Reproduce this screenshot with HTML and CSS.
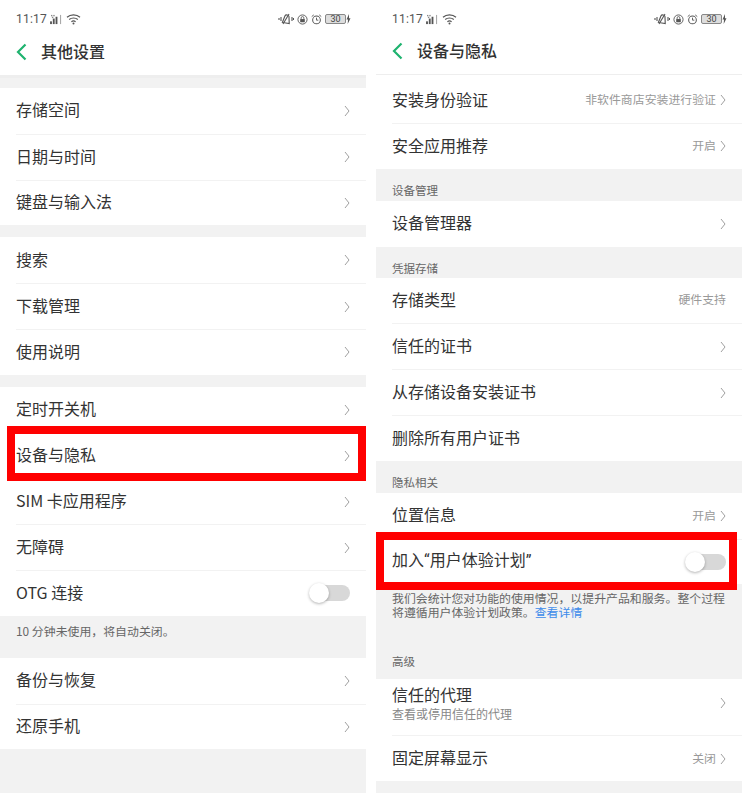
FILE: index.html
```html
<!DOCTYPE html>
<html lang="zh-CN">
<head>
<meta charset="utf-8">
<title>设置</title>
<link rel="stylesheet" href="styles.css">
</head>
<body>
<svg class="defs" width="0" height="0" aria-hidden="true">
  <symbol id="chev" viewBox="0 0 6 12"><path d="M1 1l4 5-4 5" fill="none" stroke="#a0a0a0" stroke-width="1"/></symbol>
  <symbol id="back" viewBox="0 0 11 18"><path d="M9.5 1.5L2 9l7.5 7.5" fill="none" stroke="#1fb36f" stroke-width="2.2"/></symbol>
  <symbol id="sig" viewBox="0 0 14 12"><g fill="#555"><rect x="0" y="8" width="2" height="3"/><rect x="3" y="5" width="2" height="6"/><rect x="6" y="3" width="2" height="8"/><rect x="11" y="1" width="1" height="10" fill="#999"/><rect x="1" y="1" width="1.500" height="1.500" fill="#888"/><rect x="3.500" y="1" width="1.500" height="1.500" fill="#888"/><rect x="2" y="3" width="1.500" height="1.500" fill="#888"/></g></symbol>
  <symbol id="wifi" viewBox="0 0 15 12"><g fill="none" stroke="#555" stroke-width="1.2"><path d="M1 4.200c3.600-3.200 9.400-3.200 13 0"/><path d="M3.200 6.500c2.400-2 6.200-2 8.600 0"/><path d="M5.400 8.700c1.200-.9 3-.9 4.200 0"/></g><circle cx="7.500" cy="10.500" r="1" fill="#555"/></symbol>
  <symbol id="vib" viewBox="0 0 16 12"><g fill="none" stroke="#555" stroke-width="1.100"><path d="M5 10l1.500-7c.4-1.600 3.600-1.600 4 0L12 10z" transform="rotate(10 8 6)"/><path d="M3 4v4M1 5v2M14 4v4M15.500 5v2"/><path d="M5 11L11 1"/></g></symbol>
  <symbol id="lock" viewBox="0 0 12 12"><circle cx="6" cy="6" r="5" fill="none" stroke="#555" stroke-width="1"/><rect x="3.500" y="5.500" width="5" height="3.500" fill="#555"/><path d="M4.500 5.500V4.300a1.500 1.500 0 0 1 3 0v1.200" fill="none" stroke="#555" stroke-width=".9"/></symbol>
  <symbol id="alarm" viewBox="0 0 12 12"><circle cx="6" cy="6.500" r="4.200" fill="none" stroke="#555" stroke-width="1.100"/><path d="M6 4v2.700h2M.8 2.800L3 1M11.200 2.800L9 1" fill="none" stroke="#555" stroke-width="1"/></symbol>
  <symbol id="bolt" viewBox="0 0 5 10"><path d="M3 0L.5 5.500H2L1.700 10 4.500 4.200H3z" fill="#555"/></symbol>
</svg>

<main class="screens">
  <section class="screen">
    <div class="status">
      <span class="time">11:17</span>
      <svg class="i-sig"><use href="#sig"/></svg>
      <svg class="i-wifi"><use href="#wifi"/></svg>
      <span class="status-right">
        <svg class="i-vib"><use href="#vib"/></svg>
        <svg class="i-round"><use href="#lock"/></svg>
        <svg class="i-round"><use href="#alarm"/></svg>
        <span class="batt">30</span>
        <svg class="i-bolt"><use href="#bolt"/></svg>
      </span>
    </div>
    <header class="nav">
      <svg class="i-back"><use href="#back"/></svg>
      <h1>其他设置</h1>
    </header>
    <div class="gap gap-first"></div>
    <div class="group">
      <div class="row"><span class="label">存储空间</span><svg class="i-chev"><use href="#chev"/></svg></div>
      <div class="row"><span class="label">日期与时间</span><svg class="i-chev"><use href="#chev"/></svg></div>
      <div class="row"><span class="label">键盘与输入法</span><svg class="i-chev"><use href="#chev"/></svg></div>
    </div>
    <div class="gap"></div>
    <div class="group">
      <div class="row"><span class="label">搜索</span><svg class="i-chev"><use href="#chev"/></svg></div>
      <div class="row"><span class="label">下载管理</span><svg class="i-chev"><use href="#chev"/></svg></div>
      <div class="row"><span class="label">使用说明</span><svg class="i-chev"><use href="#chev"/></svg></div>
    </div>
    <div class="gap"></div>
    <div class="group">
      <div class="row"><span class="label">定时开关机</span><svg class="i-chev"><use href="#chev"/></svg></div>
      <div class="row"><span class="label">设备与隐私</span><svg class="i-chev"><use href="#chev"/></svg><span class="mark mark-left"></span></div>
      <div class="row"><span class="label">SIM 卡应用程序</span><svg class="i-chev"><use href="#chev"/></svg></div>
      <div class="row"><span class="label">无障碍</span><svg class="i-chev"><use href="#chev"/></svg></div>
      <div class="row"><span class="label">OTG 连接</span><span class="switch"></span></div>
    </div>
    <div class="note note-otg">10 分钟未使用，将自动关闭。</div>
    <div class="group">
      <div class="row"><span class="label">备份与恢复</span><svg class="i-chev"><use href="#chev"/></svg></div>
      <div class="row"><span class="label">还原手机</span><svg class="i-chev"><use href="#chev"/></svg></div>
    </div>
    <div class="fill"></div>
  </section>

  <section class="screen">
    <div class="status">
      <span class="time">11:17</span>
      <svg class="i-sig"><use href="#sig"/></svg>
      <svg class="i-wifi"><use href="#wifi"/></svg>
      <span class="status-right">
        <svg class="i-vib"><use href="#vib"/></svg>
        <svg class="i-round"><use href="#lock"/></svg>
        <svg class="i-round"><use href="#alarm"/></svg>
        <span class="batt">30</span>
        <svg class="i-bolt"><use href="#bolt"/></svg>
      </span>
    </div>
    <header class="nav nav-line">
      <svg class="i-back"><use href="#back"/></svg>
      <h1>设备与隐私</h1>
    </header>
    <div class="group group-top">
      <div class="row"><span class="label">安装身份验证</span><span class="value">非软件商店安装进行验证</span><svg class="i-chev"><use href="#chev"/></svg></div>
      <div class="row"><span class="label">安全应用推荐</span><span class="value">开启</span><svg class="i-chev"><use href="#chev"/></svg></div>
    </div>
    <div class="section">设备管理</div>
    <div class="group">
      <div class="row"><span class="label">设备管理器</span><svg class="i-chev"><use href="#chev"/></svg></div>
    </div>
    <div class="section section-short">凭据存储</div>
    <div class="group">
      <div class="row"><span class="label">存储类型</span><span class="value">硬件支持</span></div>
      <div class="row"><span class="label">信任的证书</span><svg class="i-chev"><use href="#chev"/></svg></div>
      <div class="row"><span class="label">从存储设备安装证书</span><svg class="i-chev"><use href="#chev"/></svg></div>
      <div class="row"><span class="label">删除所有用户证书</span></div>
    </div>
    <div class="section">隐私相关</div>
    <div class="group">
      <div class="row"><span class="label">位置信息</span><span class="value">开启</span><svg class="i-chev"><use href="#chev"/></svg></div>
      <div class="row"><span class="label">加入<span class="quote">“</span>用户体验计划<span class="quote">”</span></span><span class="switch"></span><span class="mark mark-right"></span></div>
    </div>
    <div class="note note-plan">我们会统计您对功能的使用情况，以提升产品和服务。整个过程将遵循用户体验计划政策。<a class="link">查看详情</a></div>
    <div class="section section-adv">高级</div>
    <div class="group">
      <div class="row row-tall"><span class="label-stack"><span class="label">信任的代理</span><span class="sub">查看或停用信任的代理</span></span><svg class="i-chev i-chev-up"><use href="#chev"/></svg></div>
      <div class="row"><span class="label">固定屏幕显示</span><span class="value">关闭</span><svg class="i-chev"><use href="#chev"/></svg></div>
    </div>
    <div class="fill"></div>
  </section>
</main>
</body>
</html>
```

FILE: styles.css
```css
* { box-sizing: border-box; }
html, body { margin: 0; padding: 0; background: #fff; }
body {
  width: 742px;
  height: 793px;
  overflow: hidden;
  font-family: "Noto Sans CJK SC", "Noto Sans", sans-serif;
  color: #333;
}
.defs { position: absolute; }
.screens { display: flex; gap: 10px; height: 793px; }
.screen { width: 366px; height: 793px; display: flex; flex-direction: column; background: #f2f2f2; overflow: hidden; }

.status { height: 32px; flex: none; background: #fff; display: flex; align-items: center; padding: 6px 15px 0 16px; gap: 3px; }
.time { font-family: Roboto, sans-serif; font-size: 12px; color: #555; letter-spacing: .2px; }
.i-sig { width: 13px; height: 11px; }
.i-wifi { width: 15px; height: 12px; }
.status-right { margin-left: auto; display: flex; align-items: center; gap: 3px; }
.i-vib { width: 16px; height: 12px; }
.i-round { width: 11px; height: 11px; }
.batt {
  width: 21px; height: 10px;
  border: 1px solid #888; border-radius: 2px; background: #ddd;
  font-family: Roboto, sans-serif; font-size: 9px; line-height: 8px; text-align: center; color: #444;
}
.i-bolt { width: 5px; height: 10px; margin-left: -3px; }

.nav { height: 43px; flex: none; background: #fff; display: flex; align-items: center; padding: 0 0 4px 16px; }
.nav-line { border-bottom: 1px solid #eee; }
.i-back { width: 11px; height: 18px; }
.nav h1 { margin: 0 0 2px 14px; font-size: 16px; font-weight: 500; color: #333; line-height: 20px; }

.gap { height: 12px; flex: none; }
.gap-first { height: 13px; border-top: 3px solid #eee; }

.group { background: #fff; flex: none; padding-left: 16px; }
.group-top { padding-top: 2.200px; }
.row { position: relative; height: 45.800px; display: flex; align-items: center; padding-right: 16px; border-top: 1px solid #f2f2f2; }
.row:first-child { border-top: 0; }
.row-tall { height: 56px; }
.label { font-size: 16px; line-height: 20px; color: #333; margin-bottom: 3px; }
.quote { font-family: Roboto, sans-serif; }
.label-stack { display: flex; flex-direction: column; padding-bottom: 9px; }
.label-stack .label { margin-bottom: 0; }
.sub { font-size: 12px; line-height: 16px; color: #888; margin-top: 2px; }
.value { margin-left: auto; font-size: 11.900px; color: #999; margin-bottom: 3px; }
.value + .i-chev { margin-left: 4px; }
.i-chev { width: 6px; height: 12px; margin-left: auto; flex: none; }
.i-chev-up { margin-bottom: 8px; }

.switch { position: relative; margin-left: auto; width: 36px; height: 16px; border-radius: 8px; background: #d8d8d8; }
.switch::before {
  content: ""; position: absolute; left: -5px; top: -2px; width: 20px; height: 20px;
  border-radius: 50%; background: #fff; box-shadow: 0 1px 3px rgba(0,0,0,.3);
}

.mark { position: absolute; z-index: 1; border: 8px solid #f00; pointer-events: none; }
.mark-left { left: -9px; right: 0; top: -8px; bottom: -2.500px; }
.mark-right { left: -16px; right: 5px; top: -7.500px; bottom: -5.500px; }

.section { height: 32px; flex: none; padding: 13px 16px 0; font-size: 11.500px; line-height: 16px; color: #666; }
.section-short { height: 31px; }
.section-adv { height: 47px; padding-top: 21px; }
.note { flex: none; padding: 0 14px 0 16px; font-size: 11.900px; color: #666; }
.note-otg { height: 42px; line-height: 16px; padding-top: 7px; }
.note-plan { height: 48px; line-height: 14px; padding-top: 7px; }
.link { color: #3d8bea; }
.fill { flex: 1; }
```
